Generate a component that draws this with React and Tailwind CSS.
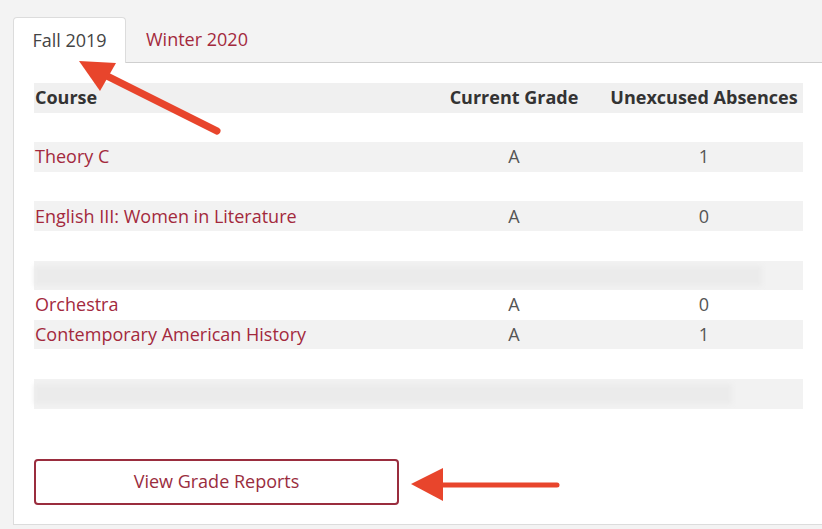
import React from "react";

const rows = [
  { course: "", grade: "", abs: "", shaded: false, marks: true },
  { course: "Theory C", grade: "A", abs: "1", shaded: true },
  { course: "", grade: "", abs: "", shaded: false },
  { course: "English III: Women in Literature", grade: "A", abs: "0", shaded: true },
  { course: "", grade: "", abs: "", shaded: false },
  { course: "", grade: "", abs: "", shaded: true, blur: "w-[728px]" },
  { course: "Orchestra", grade: "A", abs: "0", shaded: false },
  { course: "Contemporary American History", grade: "A", abs: "1", shaded: true },
  { course: "", grade: "", abs: "", shaded: false },
  { course: "", grade: "", abs: "", shaded: true, blur: "w-[698px]" },
];

function Arrows() {
  return (
    <svg
      className="absolute left-0 top-0 pointer-events-none"
      width="822"
      height="529"
      viewBox="0 0 822 529"
    >
      <line x1="105" y1="75" x2="217" y2="131" stroke="#e8452c" strokeWidth="7" strokeLinecap="round" />
      <polygon points="79,61 116,63 100,91" fill="#e8452c" />
      <line x1="440" y1="485" x2="557" y2="485" stroke="#e8452c" strokeWidth="5" strokeLinecap="round" />
      <polygon points="411,484 443,468 443,501" fill="#e8452c" />
    </svg>
  );
}

export default function App() {
  return (
    <div
      className="relative w-[822px] h-[529px] overflow-hidden bg-[#f3f3f3]"
      style={{ fontFamily: '"Open Sans", "Noto Sans", sans-serif' }}
    >
      {/* tabs */}
      <div className="flex pt-[17px] pl-[13px]">
        <div className="w-[113px] h-[46px] bg-white border border-[#dcdcdc] border-b-0 rounded-t-[4px] flex items-center justify-center text-[18px] text-[#444]">
          Fall 2019
        </div>
        <div className="flex-1 h-[46px] border-b border-[#cfcfcf] flex items-center pl-[20px] text-[18px] text-[#a3293d]">
          Winter 2020
        </div>
      </div>

      {/* panel */}
      <div className="ml-[13px] h-[462px] bg-white border-l border-b border-[#dcdcdc] pt-[20px] pl-[20px]">
        <div className="w-[769px]">
          <div className="grid grid-cols-[1fr_136px_196px] gap-x-[24px] items-center h-[29.6px] bg-[#f0f0f0] text-[18px] font-bold text-[#333] px-[1px]">
            <div>Course</div>
            <div className="text-center">Current Grade</div>
            <div className="text-center">Unexcused Absences</div>
          </div>
          {rows.map((r, i) => (
            <div
              key={i}
              className={`relative grid grid-cols-[1fr_136px_196px] gap-x-[24px] items-center h-[29.6px] text-[18px] px-[1px] ${
                r.shaded ? "bg-[#f2f2f2]" : "bg-white"
              }`}
            >
              {r.blur && (
                <div className={`absolute left-0 top-[5px] h-[20px] ${r.blur} bg-[#ebebeb] blur-[2px]`} />
              )}
              <div className="relative text-[#a3293d]">{r.course}</div>
              <div className="relative text-center text-[#555]">{r.grade}</div>
              <div className="relative text-center text-[#555]">{r.abs}</div>
            </div>
          ))}
        </div>

        <button className="mt-[50px] w-[365px] h-[46px] border-2 border-[#9a2d3e] rounded-[4px] text-[18px] text-[#9a2d3e] bg-white">
          View Grade Reports
        </button>
      </div>

      <Arrows />
    </div>
  );
}
